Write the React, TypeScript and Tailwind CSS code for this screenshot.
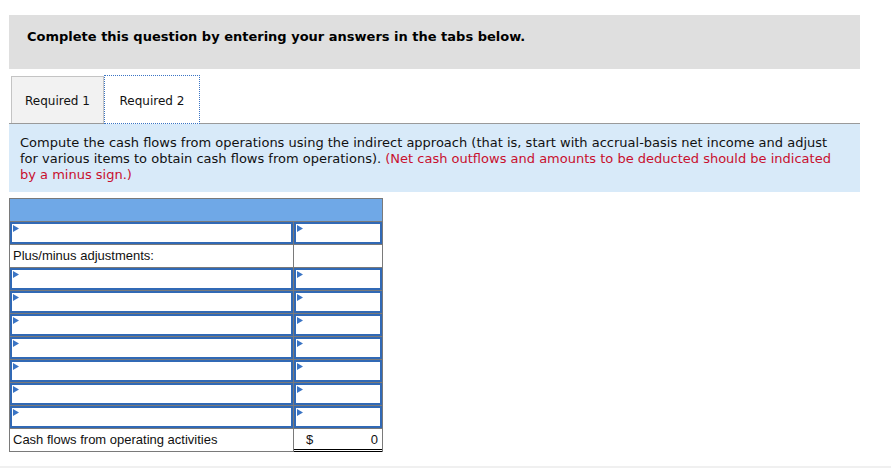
import React from "react";

const Flag = () => (
  <svg className="absolute left-[1px] top-[1px]" width="6" height="8" viewBox="0 0 6 8">
    <polygon points="0,0 6,3.5 0,7" fill="#3a74c4" />
  </svg>
);

const InputRow = () => (
  <div className="flex border-b border-[#7a7a7a]">
    <div className="w-[283px]">
      <div className="h-[22px] border-2 border-[#3169b5] relative bg-white">
        <Flag />
      </div>
    </div>
    <div className="w-[1px] bg-[#7a7a7a]" />
    <div className="w-[88px]">
      <div className="h-[22px] border-2 border-[#3169b5] relative bg-white">
        <Flag />
      </div>
    </div>
  </div>
);

export default function App() {
  const verdana = { fontFamily: '"DejaVu Sans", Verdana, sans-serif' };
  const arial = { fontFamily: '"Liberation Sans", Arial, sans-serif' };
  return (
    <div className="w-[891px] h-[468px] bg-white relative overflow-hidden">
      <div className="ml-[9px] w-[851px] pt-[15px]">
        <div
          className="h-[54px] bg-[#dfdfdf] pl-[18px] pt-[14px] text-[13px] leading-[16px] font-bold text-black"
          style={verdana}
        >
          Complete this question by entering your answers in the tabs below.
        </div>
        <div className="mt-[6px] h-[49px] flex items-end border-b border-[#9a9a9a]" style={verdana}>
          <div className="ml-[2px] w-[93px] h-[47px] bg-[#f2f2f2] border border-b-0 border-[#c4c4c4] flex items-center justify-center pt-[2px] text-[12px] text-[#111]">
            Required 1
          </div>
          <div className="w-[96px] h-[49px] -mb-[1px] bg-white border border-dotted border-[#3a74c4] flex items-center justify-center pt-[2px] text-[12px] text-[#111] relative z-10">
            Required 2
          </div>
        </div>
        <div
          className="h-[68px] bg-[#d8eaf9] pt-[11px] pl-[11px] pr-[20px] text-[13px] leading-[16px] text-[#111]"
          style={verdana}
        >
          Compute the cash flows from operations using the indirect approach (that is, start with accrual-basis net income and adjust for various items to obtain cash flows from operations).{" "}
          <span className="text-[#c8102e]">
            (Net cash outflows and amounts to be deducted should be indicated by a minus sign.)
          </span>
        </div>
        <div className="mt-[6px] w-[374px] border-l border-r border-t border-[#7a7a7a]" style={arial}>
          <div className="h-[23px] bg-[#6fa8e7] border-b border-[#7a7a7a]" />
          <InputRow />
          <div className="flex border-b border-[#7a7a7a] h-[23px]">
            <div className="w-[283px] pl-[3px] text-[13px] leading-[22px] text-[#111]">
              Plus/minus adjustments:
            </div>
            <div className="w-[1px] bg-[#7a7a7a]" />
            <div className="w-[88px]" />
          </div>
          <InputRow />
          <InputRow />
          <InputRow />
          <InputRow />
          <InputRow />
          <InputRow />
          <InputRow />
          <div className="flex h-[23px] text-[13px] text-[#111]">
            <div className="w-[283px] pl-[3px] leading-[22px] border-b border-[#7a7a7a] h-[23px]">
              Cash flows from operating activities
            </div>
            <div className="w-[1px] bg-[#7a7a7a]" />
            <div className="w-[88px] h-[23px] border-b-[3px] border-double border-black flex items-center justify-between pl-[12px] pr-[4px] pt-[2px]">
              <span>$</span>
              <span>0</span>
            </div>
          </div>
        </div>
      </div>
      <div className="absolute left-0 right-0 bottom-0 h-[2px] bg-[#f0f0f0]" />
    </div>
  );
}
